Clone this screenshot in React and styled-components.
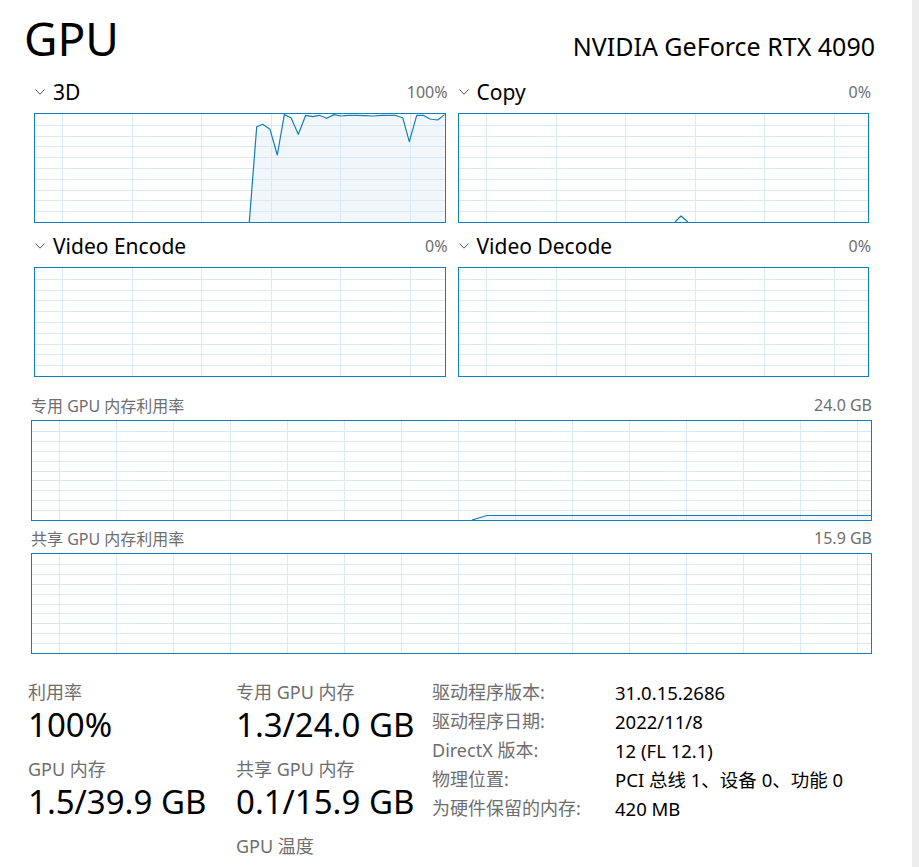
import React from 'react';
import styled, { createGlobalStyle } from 'styled-components';

const FONT = '"Noto Sans", "Noto Sans CJK SC", sans-serif';
const BLUE = '#117dbb';
const GRID = '#d9eaf4';
const FILL = '#f1f6fa';
const GRAY = '#6e6e6e';

const Global = createGlobalStyle`
  html, body, #root { margin: 0; padding: 0; height: 100%; }
  body { background: #fff; font-family: ${FONT}; color: #000; overflow: hidden; }
`;

const Page = styled.div`
  display: flex;
  height: 100%;
`;

const Main = styled.main`
  flex: 1;
  min-width: 0;
  box-sizing: border-box;
  padding: 10px 37px 0 28px;
  overflow: hidden;
`;

const ScrollTrack = styled.div`
  width: 7px;
  flex: none;
  background: #ededed;
`;

const Header = styled.header`
  display: flex;
  justify-content: space-between;
  align-items: baseline;
  height: 56px;
`;

const Title = styled.h1`
  margin: 0 0 0 -4px;
  font-size: 46px;
  font-weight: 400;
  line-height: 56px;
`;

const Model = styled.div`
  font-size: 25px;
  line-height: 56px;
`;

const EngineGrid = styled.section`
  display: grid;
  grid-template-columns: 1fr 1fr;
  column-gap: 12px;
  row-gap: 11px;
  margin: 14px 6px 0 6px;
`;

const EngineHead = styled.div`
  display: flex;
  align-items: center;
  height: 24px;
  margin: 0 -2px 9px 1px;
`;

const Chevron = styled.svg`
  width: 10px;
  height: 6px;
  margin-right: 8px;
  flex: none;
`;

const EngineName = styled.span`
  font-size: 21px;
  line-height: 24px;
`;

const Percent = styled.span`
  margin-left: auto;
  font-size: 16px;
  line-height: 24px;
  color: ${GRAY};
`;

const MemSection = styled.section`
  margin: 16px 3px 0 3px;
`;

const MemHead = styled.div`
  display: flex;
  justify-content: space-between;
  align-items: center;
  height: 24px;
  margin: ${p => (p.$first ? '0' : '5px')} 0 3px 0;
  font-size: 16px;
  color: ${GRAY};
`;

const ChartBox = styled.div`
  height: ${p => p.$h}px;
  box-sizing: border-box;
  border: 1px solid ${BLUE};
  background: #fff;
  overflow: hidden;
  svg { display: block; width: 100%; height: 100%; }
`;

const Stats = styled.section`
  display: grid;
  grid-template-columns: 208px 196px 1fr;
  margin-top: 24px;
`;

const StatCol = styled.div`
  display: flex;
  flex-direction: column;
  gap: 11px;
`;

const StatLabel = styled.div`
  font-size: 18px;
  line-height: 28px;
  color: ${GRAY};
`;

const StatValue = styled.div`
  font-size: 33px;
  line-height: 38px;
`;

const Details = styled.dl`
  display: grid;
  grid-template-columns: 183px auto;
  grid-auto-rows: 29px;
  margin: 0;
  font-size: 18px;
  line-height: 29px;
`;

const DetailKey = styled.dt`
  color: ${GRAY};
  white-space: nowrap;
`;

const DetailVal = styled.dd`
  margin: 0;
  font-size: 18.5px;
  white-space: nowrap;
`;

function Chart({ h, w, rows, offset, spacing, line }) {
  const ih = h - 2;
  const hl = [];
  for (let i = 1; i < rows; i++) hl.push(Math.round((i * ih) / rows) + 0.5);
  const vl = [];
  for (let x = offset; x < w; x += spacing) vl.push(Math.round(x) + 0.5);
  let poly = null;
  let area = null;
  if (line) {
    poly = line.map(p => p.join(',')).join(' ');
    const first = line[0];
    const last = line[line.length - 1];
    area = `${first[0]},${ih} ${poly} ${last[0]},${ih}`;
  }
  return (
    <ChartBox $h={h}>
      <svg viewBox={`0 0 ${w} ${ih}`} preserveAspectRatio="none">
        {area && <polygon points={area} fill={FILL} />}
        <g stroke={GRID} strokeWidth="1" shapeRendering="crispEdges">
          {hl.map(y => <line key={'h' + y} x1="0" x2={w} y1={y} y2={y} />)}
          {vl.map(x => <line key={'v' + x} x1={x} x2={x} y1="0" y2={ih} />)}
        </g>
        {poly && <polyline points={poly} fill="none" stroke={BLUE} strokeWidth="1.2" strokeLinejoin="round" />}
      </svg>
    </ChartBox>
  );
}

const LINE_3D = [
  [214.3, 108], [221.7, 12.7], [227.7, 10.3], [235, 15.3], [242.3, 41], [249.3, 0.6],
  [256, 3.7], [263.3, 20.3], [270.7, 1.3], [277.7, 2.7], [284.3, 1.3], [291.7, 4.3],
  [299, 0.6], [306, 2], [313.3, 1.3], [321.7, 1.3], [330, 1.7], [338.3, 2], [346.7, 1.3],
  [360, 1.3], [367.7, 3.7], [374.3, 27.7], [381.7, 1.3], [388.3, 1.3], [395, 5],
  [402.7, 6], [409.5, 0.6],
];

const LINE_COPY = [[216, 108], [222, 102], [229, 108]];
const LINE_DEDICATED = [[440, 99], [455, 94.5], [839, 94.5]];

const engines = [
  { name: '3D', pct: '100%', line: LINE_3D },
  { name: 'Copy', pct: '0%', line: LINE_COPY },
  { name: 'Video Encode', pct: '0%' },
  { name: 'Video Decode', pct: '0%' },
];

const details = [
  ['驱动程序版本:', '31.0.15.2686'],
  ['驱动程序日期:', '2022/11/8'],
  ['DirectX 版本:', '12 (FL 12.1)'],
  ['物理位置:', 'PCI 总线 1、设备 0、功能 0'],
  ['为硬件保留的内存:', '420 MB'],
];

export default function App() {
  return (
    <>
      <Global />
      <Page>
        <Main>
          <Header>
            <Title>GPU</Title>
            <Model>NVIDIA GeForce RTX 4090</Model>
          </Header>

          <EngineGrid>
            {engines.map(e => (
              <div key={e.name}>
                <EngineHead>
                  <Chevron viewBox="0 0 10 6">
                    <polyline points="0.5,0.5 5,5.2 9.5,0.5" fill="none" stroke="#505050" strokeWidth="1" />
                  </Chevron>
                  <EngineName>{e.name}</EngineName>
                  <Percent>{e.pct}</Percent>
                </EngineHead>
                <Chart h={110} w={409.5} rows={10} offset={27} spacing={69.5} line={e.line} />
              </div>
            ))}
          </EngineGrid>

          <MemSection>
            <MemHead $first>
              <span>专用 GPU 内存利用率</span>
              <span>24.0 GB</span>
            </MemHead>
            <Chart h={101} w={839} rows={10} offset={27} spacing={57} line={LINE_DEDICATED} />
            <MemHead>
              <span>共享 GPU 内存利用率</span>
              <span>15.9 GB</span>
            </MemHead>
            <Chart h={101} w={839} rows={10} offset={27} spacing={57} />
          </MemSection>

          <Stats>
            <StatCol>
              <div>
                <StatLabel>利用率</StatLabel>
                <StatValue>100%</StatValue>
              </div>
              <div>
                <StatLabel>GPU 内存</StatLabel>
                <StatValue>1.5/39.9 GB</StatValue>
              </div>
            </StatCol>
            <StatCol>
              <div>
                <StatLabel>专用 GPU 内存</StatLabel>
                <StatValue>1.3/24.0 GB</StatValue>
              </div>
              <div>
                <StatLabel>共享 GPU 内存</StatLabel>
                <StatValue>0.1/15.9 GB</StatValue>
              </div>
              <div>
                <StatLabel>GPU 温度</StatLabel>
              </div>
            </StatCol>
            <Details>
              {details.map(([k, v]) => (
                <React.Fragment key={k}>
                  <DetailKey>{k}</DetailKey>
                  <DetailVal>{v}</DetailVal>
                </React.Fragment>
              ))}
            </Details>
          </Stats>
        </Main>
        <ScrollTrack />
      </Page>
    </>
  );
}
